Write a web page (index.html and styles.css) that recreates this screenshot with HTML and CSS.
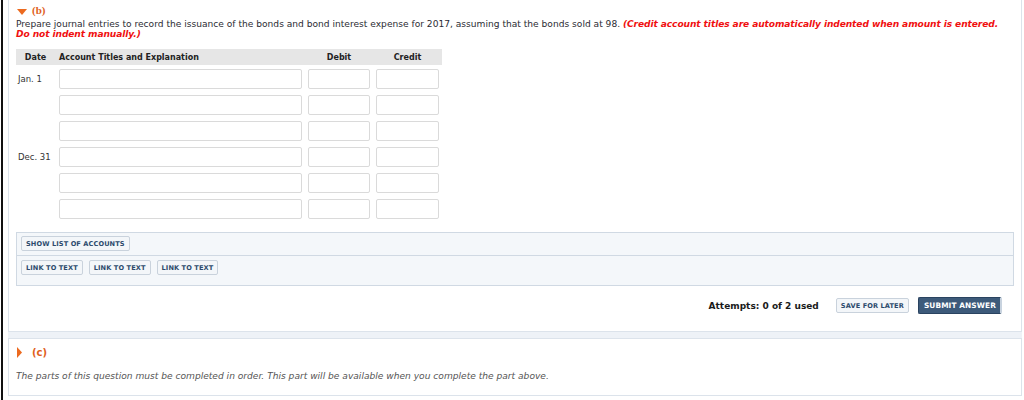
FILE: index.html
```html
<!DOCTYPE html>
<html lang="en">
<head>
<meta charset="utf-8">
<title>Journal entries</title>
<link rel="stylesheet" href="styles.css">
</head>
<body>
<div class="page">
  <div class="rail"></div>
  <div class="main">
    <section class="part part-b">
      <div class="part-head">
        <svg class="tri-down" width="10" height="6" viewBox="0 0 10 6"><polygon points="0,0 10,0 5,6" fill="#ec6a1f"/></svg>
        <span class="part-label serif">(b)</span>
      </div>
      <p class="prompt">Prepare journal entries to record the issuance of the bonds and bond interest expense for 2017, assuming that the bonds sold at 98. <em class="note">(Credit account titles are automatically indented when amount is entered.</em> <em class="note">Do not indent manually.)</em></p>

      <div class="journal">
        <div class="jhead">
          <span class="h-date">Date</span>
          <span class="h-acct">Account Titles and Explanation</span>
          <span class="h-num">Debit</span>
          <span class="h-num">Credit</span>
        </div>
        <div class="jrow"><span class="jdate">Jan. 1</span><span class="field"></span><span class="field"></span><span class="field"></span></div>
        <div class="jrow"><span class="jdate"></span><span class="field"></span><span class="field"></span><span class="field"></span></div>
        <div class="jrow"><span class="jdate"></span><span class="field"></span><span class="field"></span><span class="field"></span></div>
        <div class="jrow"><span class="jdate">Dec. 31</span><span class="field"></span><span class="field"></span><span class="field"></span></div>
        <div class="jrow"><span class="jdate"></span><span class="field"></span><span class="field"></span><span class="field"></span></div>
        <div class="jrow"><span class="jdate"></span><span class="field"></span><span class="field"></span><span class="field"></span></div>
      </div>

      <div class="tools">
        <div class="tools-row first"><span class="btn">SHOW LIST OF ACCOUNTS</span></div>
        <div class="tools-row second">
          <span class="btn">LINK TO TEXT</span>
          <span class="btn">LINK TO TEXT</span>
          <span class="btn">LINK TO TEXT</span>
        </div>
      </div>

      <div class="actions">
        <span class="attempts">Attempts: 0 of 2 used</span>
        <span class="btn btn-save">SAVE FOR LATER</span>
        <span class="btn btn-submit">SUBMIT ANSWER</span>
      </div>
    </section>

    <section class="part part-c">
      <div class="part-head">
        <svg class="tri-right" width="5" height="11" viewBox="0 0 5 11"><polygon points="0,0 5,5.5 0,11" fill="#ec6a1f"/></svg>
        <span class="part-label">(c)</span>
      </div>
      <p class="locked">The parts of this question must be completed in order. This part will be available when you complete the part above.</p>
    </section>
  </div>
</div>
</body>
</html>
```

FILE: styles.css
```css
html, body {
  margin: 0;
  padding: 0;
  background: #ffffff;
}

body {
  font-family: "DejaVu Sans", Verdana, sans-serif;
  font-size: 9.1px;
  color: #333333;
}

.page {
  display: flex;
  height: 400px;
  overflow: hidden;
}

.rail {
  width: 2px;
  margin-left: 1px;
  background: #111111;
  flex: none;
}

.main {
  flex: 1;
  margin-left: 5px;
  margin-right: 2px;
  background: #eef2f7;
  display: flex;
  flex-direction: column;
  gap: 6px;
  align-self: flex-start;
}

.part {
  background: #ffffff;
  border: 1px solid #dce3eb;
  padding: 0 7px;
}

.part-b {
  border-top: none;
  padding-top: 3px;
  padding-bottom: 17px;
}

.part-c {
  padding-top: 6px;
  padding-bottom: 14px;
}

.part-head {
  display: flex;
  align-items: center;
  height: 14px;
  gap: 5px;
  padding-left: 1px;
}

.tri-down {
  margin-top: 4px;
}

.tri-right {
  margin-top: 1px;
  margin-right: 5px;
}

.part-label {
  color: #e0601c;
  font-weight: bold;
  font-size: 10px;
}

.serif {
  font-family: "Liberation Serif", "DejaVu Serif", serif;
  font-size: 11px;
}

.prompt {
  margin: 2px 0 0;
  line-height: 10px;
  color: #2b2b33;
}

.note {
  color: #f01010;
  font-weight: bold;
  letter-spacing: -0.1px;
}

.journal {
  margin-top: 10px;
  width: 426px;
}

.jhead,
.jrow {
  display: grid;
  grid-template-columns: 37px 243px 62px 63px;
  column-gap: 6px;
  padding-right: 3px;
}

.jhead {
  background: #e6e6e6;
  height: 16px;
  align-items: center;
  font-weight: bold;
  font-size: 8px;
  color: #222222;
}

.h-date {
  text-align: center;
  padding-left: 2px;
}

.h-num {
  text-align: center;
}

.jrow {
  margin-top: 4px;
  height: 20px;
}

.jrow + .jrow {
  margin-top: 6px;
}

.jdate {
  font-size: 8.5px;
  padding: 5px 0 0 2px;
  color: #333333;
  white-space: nowrap;
}

.field {
  border: 1px solid #dadada;
  border-radius: 2px;
  background: #ffffff;
}

.tools {
  margin-top: 13px;
  background: #f4f7fa;
  border: 1px solid #d0d9e3;
}

.tools-row {
  display: flex;
  gap: 6px;
  padding: 3px 4px;
}

.tools-row.first {
  height: 16px;
  border-bottom: 1px solid #d0d9e3;
}

.tools-row.second {
  padding-top: 4px;
  padding-bottom: 10px;
}

.btn {
  display: inline-flex;
  align-items: center;
  height: 13px;
  padding: 0 4px;
  border: 1px solid #c9d2dc;
  border-radius: 2px;
  background: #f3f6f9;
  color: #2c4a6c;
  font-weight: bold;
  font-size: 6.6px;
  letter-spacing: 0.1px;
  white-space: nowrap;
}

.actions {
  display: flex;
  justify-content: flex-end;
  align-items: center;
  margin-top: 11px;
  padding-right: 12px;
  height: 17px;
}

.attempts {
  font-weight: bold;
  font-size: 9px;
  color: #1a1a1a;
  margin-right: 17px;
}

.btn-save {
  height: 13px;
  margin-right: 9px;
}

.btn-submit {
  height: 15px;
  padding: 0 4px 0 5px;
  background: #3d5a7a;
  border-color: #2a4360;
  color: #ffffff;
  font-size: 7.4px;
  border-right: 2px solid #c8d3df;
}

.locked {
  margin: 12px 0 0;
  font-style: italic;
  color: #555555;
}
```
